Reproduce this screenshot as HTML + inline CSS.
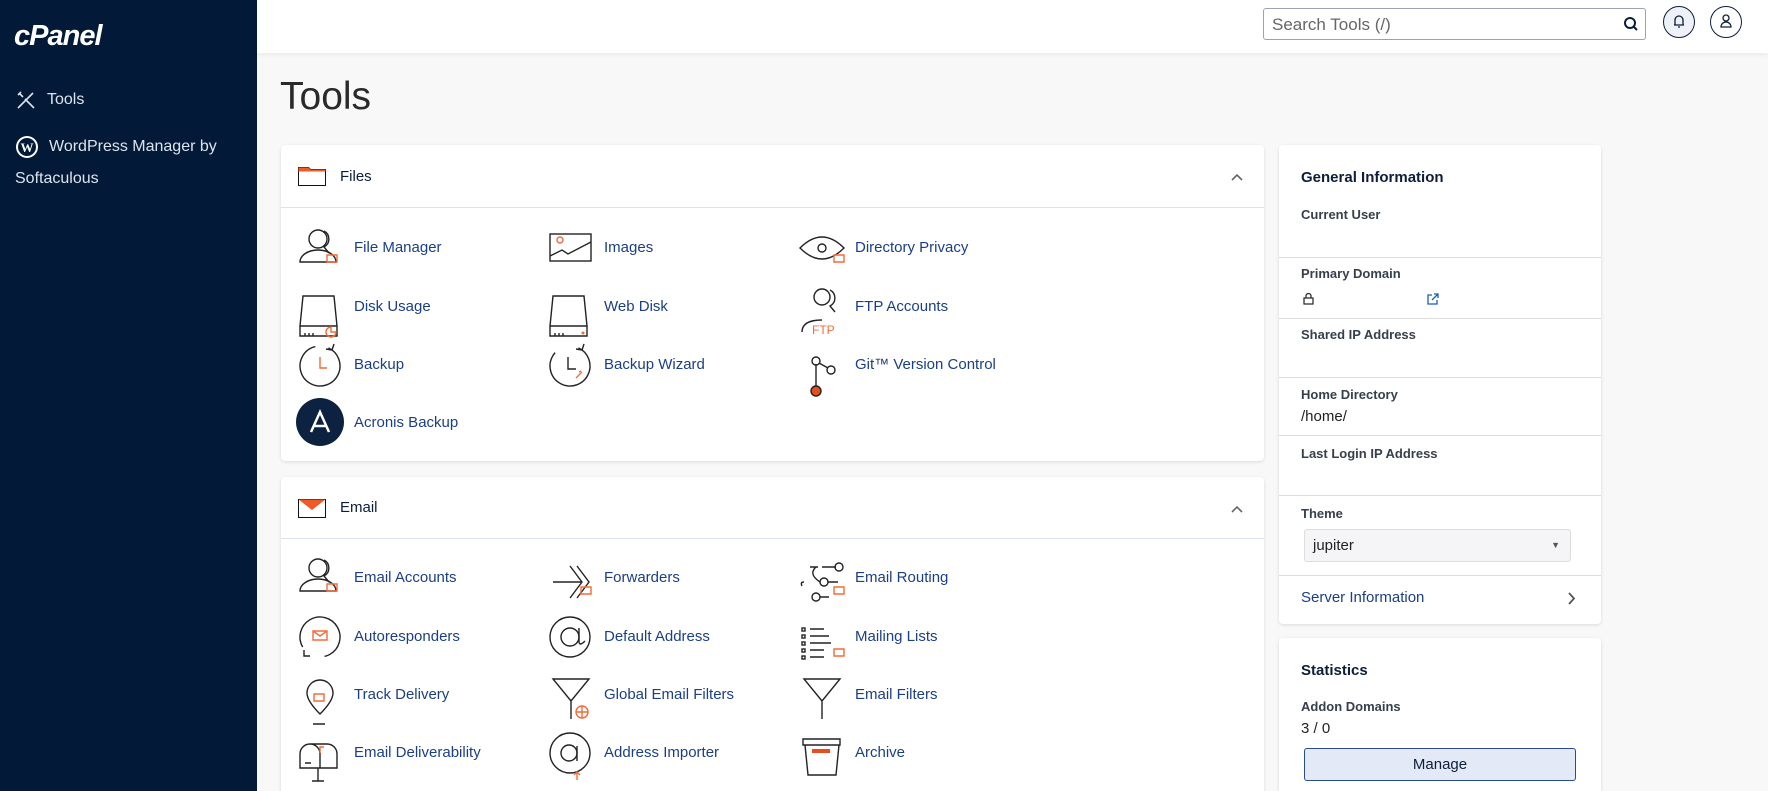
<!DOCTYPE html>
<html style="overflow:hidden;height:791px"><head><meta charset="utf-8"><style>
*{margin:0;padding:0;box-sizing:border-box}
html,body{width:1768px;height:791px;overflow:hidden}
body{background:#f8f8f8;font-family:"Liberation Sans",sans-serif;position:relative}
#side{position:absolute;left:0;top:0;width:257px;height:791px;background:#021a38;color:#dde3ec}
#top{position:absolute;left:257px;top:0;right:0;height:53px;background:#fff;box-shadow:0 1px 6px rgba(0,0,0,.08)}
.card{position:absolute;background:#fff;border-radius:4px;box-shadow:0 1px 3px rgba(0,0,0,.12);overflow:hidden}
.hd{height:63px;border-bottom:1px solid #dbe3ef;position:relative;font-size:15px;color:#0c1e3a}
.it{position:absolute;font-size:15px;color:#1b3f85}
.lbl{position:absolute;left:22px;font-size:13px;font-weight:bold;color:#363f4c}
.dv{position:absolute;left:0;right:0;height:1px;background:#dcdcdc}
svg{overflow:visible}
</style></head><body>
<div id="side">
 <div style="position:absolute;left:14px;top:20px;font-size:29px;font-weight:bold;font-style:italic;color:#fff;letter-spacing:-1px">cPanel</div>
 <svg style="position:absolute;left:16px;top:90px" width="20" height="20" viewBox="0 0 20 20" fill="none" stroke="#dde3ec" stroke-width="1.6"><path d="M2 18L17 3M3 3l4 4M18 18L9 9M2 5l3-3"/></svg>
 <div style="position:absolute;left:47px;top:91px;font-size:16px">Tools</div>
 <svg style="position:absolute;left:15px;top:135px" width="24" height="24" viewBox="0 0 24 24"><circle cx="12" cy="12" r="11" fill="#fff"/><circle cx="12" cy="12" r="9" fill="#021a38"/><text x="12" y="17" font-size="13" font-weight="bold" text-anchor="middle" fill="#fff" font-family="Liberation Serif">W</text></svg>
 <div style="position:absolute;left:49px;top:138px;font-size:16px">WordPress Manager by</div>
 <div style="position:absolute;left:15px;top:170px;font-size:16px">Softaculous</div>
</div>
<div id="top">
 <div style="position:absolute;left:1006px;top:8px;width:383px;height:32px;border:1px solid #97a3b8;border-radius:3px;font-size:17px;color:#666;padding:6px 8px">Search Tools (/)</div>
 <svg style="position:absolute;left:1366px;top:16px" width="16" height="16" viewBox="0 0 16 16" fill="none" stroke="#0c1e3a" stroke-width="2"><circle cx="7" cy="7" r="5"/><path d="M11 11l3 3"/></svg>
 <div style="position:absolute;left:1406px;top:6px;width:32px;height:32px;border:1.5px solid #0c1e3a;border-radius:50%;background:#eef1f8"></div>
 <svg style="position:absolute;left:1415px;top:14px" width="14" height="16" viewBox="0 0 14 16" fill="none" stroke="#0c1e3a" stroke-width="1.3"><path d="M3 11V6a4 4 0 018 0v5H2h10M6 13h2"/></svg>
 <div style="position:absolute;left:1453px;top:6px;width:32px;height:32px;border:1.5px solid #0c1e3a;border-radius:50%"></div>
 <svg style="position:absolute;left:1462px;top:13px" width="14" height="16" viewBox="0 0 14 16" fill="none" stroke="#0c1e3a" stroke-width="1.3"><circle cx="7" cy="5" r="3"/><path d="M2 14a5 5 0 0110 0z"/></svg>
</div>
<div style="position:absolute;left:280px;top:75px;font-size:39px;color:#2a2a2a;font-weight:300">Tools</div>

<div class="card" style="left:281px;top:145px;width:983px;height:316px">
 <div class="hd"><svg style="position:absolute;left:17px;top:22px" width="28" height="19" viewBox="0 0 28 19"><path d="M0.5 0.5h10l2 2H27.5v16H.5z" fill="#fff" stroke="#111"/><path d="M.5.5h10l2 2h15v2H.5z" fill="#f05a28"/></svg><span style="position:absolute;left:59px;top:23px">Files</span>
 <svg style="position:absolute;left:950px;top:28px" width="12" height="8" fill="none" stroke="#666" stroke-width="1.6"><path d="M1 7l5-5 5 5"/></svg></div>
</div>
<div class="card" style="left:281px;top:477px;width:983px;height:320px">
 <div class="hd" style="height:62px"><svg style="position:absolute;left:17px;top:22px" width="28" height="19" viewBox="0 0 28 19"><rect x=".5" y=".5" width="27" height="18" fill="#fff" stroke="#111"/><path d="M.5.5L14 11 27.5.5z" fill="#f05a28"/></svg><span style="position:absolute;left:59px;top:22px">Email</span>
 <svg style="position:absolute;left:950px;top:28px" width="12" height="8" fill="none" stroke="#666" stroke-width="1.6"><path d="M1 7l5-5 5 5"/></svg></div>
</div>

<svg style="position:absolute;left:0;top:0" width="1768" height="791" fill="none" stroke="#222" stroke-width="1.4">
 <g stroke="#222">
 <circle cx="318" cy="239" r="9"/><path d="M300 262a18 12 0 0136 0z"/><path d="M324 231a9 9 0 010 16l5 6"/>
 <rect x="550" y="234" width="41" height="27"/><path d="M550 256l12-6 6 4 23-12"/>
 <path d="M800 248q22-22 44 0q-22 22-44 0z"/><circle cx="822" cy="248" r="4"/>
 <path d="M303 296h31l3 30h-37zM300 326h37v10h-37z"/><path d="M305 336v-3M309 336v-3M313 336v-3"/>
 <path d="M553 296h31l3 30h-37zM550 326h37v10h-37z"/><path d="M555 336v-3M559 336v-3M563 336v-3"/>
 <circle cx="822" cy="297" r="8"/><path d="M802 332q0-12 20-12M830 290a9 9 0 010 16l5 6"/>
 <circle cx="320" cy="366" r="20" stroke-dasharray="112 14" transform="rotate(-65 320 366)"/><path d="M332 350l2-6M332 350l-6-1"/>
 <circle cx="570" cy="366" r="20" stroke-dasharray="100 26" transform="rotate(-65 570 366)"/><path d="M582 350l2-6M582 350l-6-1M568 357v12h8"/>
 <path d="M816 364v26"/><circle cx="816" cy="361" r="4"/><circle cx="831" cy="370" r="4"/><path d="M819 363l9 5"/>
 <circle cx="318" cy="568" r="9"/><path d="M300 591a18 12 0 0136 0z"/><path d="M324 560a9 9 0 010 16l5 6"/>
 <path d="M553 582h28M570 566l12 16-12 16M577 566l12 16-12 16"/>
 <path d="M810 567h8M822 567h14M828 582h10M820 597h9"/><circle cx="839" cy="567" r="4"/><circle cx="824" cy="582" r="4"/><circle cx="816" cy="597" r="4"/><path d="M816 567q-8 7 4 15M804 582q-4 0-2 4"/>
 <circle cx="320" cy="637" r="20" stroke-dasharray="100 26" transform="rotate(150 320 637)"/><path d="M304 650v6h6"/>
 <circle cx="570" cy="637" r="20"/><circle cx="570" cy="637" r="9"/><path d="M579 628v13q0 6 6 0"/>
 <rect x="802" y="628" width="3" height="3"/><rect x="802" y="635" width="3" height="3"/><rect x="802" y="642" width="3" height="3"/><rect x="802" y="649" width="3" height="3"/><rect x="802" y="656" width="3" height="3"/><path d="M810 629h14M810 636h19M810 643h21M810 650h14M810 657h14"/>
 <path d="M320 680a13 13 0 0113 13q0 8-13 21q-13-13-13-21a13 13 0 0113-13zM313 724h12"/>
 <path d="M553 679h36l-18 22zM571 701v18"/>
 <path d="M804 679h36l-18 22zM822 701v18"/>
 <path d="M300 754a10 10 0 0120 0v14h-20zM310 744h17a10 10 0 0110 10v14h-17M318 768v13M312 781h12M305 763h6"/>
 <circle cx="570" cy="753" r="20"/><circle cx="569" cy="753" r="8"/><path d="M577 746v15"/>
 <path d="M803 739h37v6h-37zM805 745l3 30h28l3-30"/>
 </g>
 <g stroke="#f26b38">
 <path d="M327 255h10v7h-10zM834 255h10v7h-10zM327 584h10v7h-10zM581 587h10v7h-10zM834 587h10v7h-10zM834 649h10v7h-10zM313 631h14v9h-14zM314 694h10v7h-10z"/>
 <path d="M313 631l7 5 7-5"/>
 <circle cx="560" cy="240" r="3"/><path d="M336 332a5 5 0 11-5-5v5z"/><path d="M320 357v11h7"/>
 <path d="M576 378l6-6M579 372l2-1"/><path d="M320 753v-6h4M577 780v-8M574 775l3-3 3 3"/>
 <circle cx="582" cy="712" r="6"/><path d="M576 712h12M582 706v12"/>
 </g>
 <circle cx="816" cy="391" r="5" fill="#e84e1c" stroke="#222"/>
 <rect x="812" y="749" width="18" height="4" fill="#e84e1c" stroke="none"/>
 <circle cx="583" cy="333" r="1.5" fill="#f26b38" stroke="none"/>
 <circle cx="320" cy="422" r="24" fill="#0d2141" stroke="none"/>
 <path d="M311 432l9-20 9 20M314 426h12" stroke="#fff" stroke-width="2.5"/>
 <text x="812" y="334" font-size="12" fill="#f26b38" stroke="none" font-family="Liberation Sans">FTP</text>
</svg>

<div class="it" style="left:354px;top:239px">File Manager</div>
<div class="it" style="left:604px;top:239px">Images</div>
<div class="it" style="left:855px;top:239px">Directory Privacy</div>
<div class="it" style="left:354px;top:298px">Disk Usage</div>
<div class="it" style="left:604px;top:298px">Web Disk</div>
<div class="it" style="left:855px;top:298px">FTP Accounts</div>
<div class="it" style="left:354px;top:356px">Backup</div>
<div class="it" style="left:604px;top:356px">Backup Wizard</div>
<div class="it" style="left:855px;top:356px">Git™ Version Control</div>
<div class="it" style="left:354px;top:414px">Acronis Backup</div>
<div class="it" style="left:354px;top:569px">Email Accounts</div>
<div class="it" style="left:604px;top:569px">Forwarders</div>
<div class="it" style="left:855px;top:569px">Email Routing</div>
<div class="it" style="left:354px;top:628px">Autoresponders</div>
<div class="it" style="left:604px;top:628px">Default Address</div>
<div class="it" style="left:855px;top:628px">Mailing Lists</div>
<div class="it" style="left:354px;top:686px">Track Delivery</div>
<div class="it" style="left:604px;top:686px">Global Email Filters</div>
<div class="it" style="left:855px;top:686px">Email Filters</div>
<div class="it" style="left:354px;top:744px">Email Deliverability</div>
<div class="it" style="left:604px;top:744px">Address Importer</div>
<div class="it" style="left:855px;top:744px">Archive</div>

<div class="card" style="left:1279px;top:145px;width:322px;height:479px">
 <div style="position:absolute;left:22px;top:24px;font-size:15px;font-weight:bold;color:#0c1e3a">General Information</div>
 <div class="lbl" style="top:62px">Current User</div>
 <div class="dv" style="top:112px"></div>
 <div class="lbl" style="top:121px">Primary Domain</div>
 <svg style="position:absolute;left:24px;top:148px" width="11" height="12" fill="none" stroke="#222" stroke-width="1.2"><rect x="1" y="5" width="9" height="6"/><path d="M3 5V3a2.5 2.5 0 015 0v2"/></svg>
 <svg style="position:absolute;left:148px;top:148px" width="12" height="12" fill="none" stroke="#1b5fb5" stroke-width="1.3"><path d="M5 2H1v9h9V7M7 1h4v4M11 1L5 7"/></svg>
 <div class="dv" style="top:173px"></div>
 <div class="lbl" style="top:182px">Shared IP Address</div>
 <div class="dv" style="top:232px"></div>
 <div class="lbl" style="top:242px">Home Directory</div>
 <div style="position:absolute;left:22px;top:263px;font-size:15px;color:#222">/home/</div>
 <div class="dv" style="top:290px"></div>
 <div class="lbl" style="top:301px">Last Login IP Address</div>
 <div class="dv" style="top:350px"></div>
 <div class="lbl" style="top:361px">Theme</div>
 <div style="position:absolute;left:25px;top:384px;width:267px;height:33px;background:#f5f5f7;border:1px solid #ddd;border-radius:3px;font-size:15px;color:#222;padding:7px 8px">jupiter<span style="position:absolute;right:10px;top:10px;font-size:9px;color:#555">▼</span></div>
 <div class="dv" style="top:430px"></div>
 <div style="position:absolute;left:22px;top:444px;font-size:15px;color:#1b3f85">Server Information</div>
 <svg style="position:absolute;left:289px;top:447px" width="8" height="13" fill="none" stroke="#555" stroke-width="1.8"><path d="M1 1l5 5.5L1 12"/></svg>
</div>
<div class="card" style="left:1279px;top:638px;width:322px;height:160px">
 <div style="position:absolute;left:22px;top:24px;font-size:15px;font-weight:bold;color:#0c1e3a">Statistics</div>
 <div class="lbl" style="top:61px">Addon Domains</div>
 <div style="position:absolute;left:22px;top:82px;font-size:15px;color:#222">3 / 0</div>
 <div style="position:absolute;left:25px;top:110px;width:272px;height:33px;background:#e3e9f7;border:1px solid #2a4c8f;border-radius:3px;font-size:15px;color:#0c1e3a;text-align:center;line-height:31px">Manage</div>
</div>
</body></html>
